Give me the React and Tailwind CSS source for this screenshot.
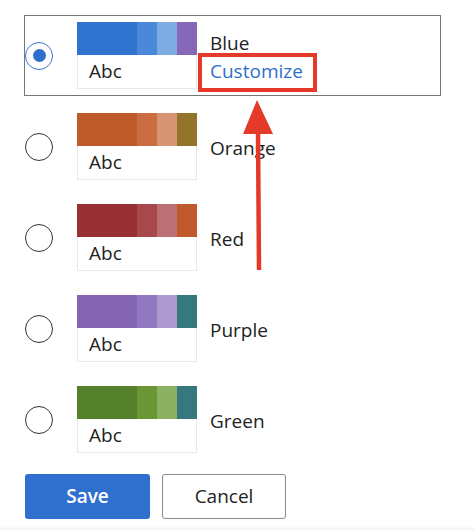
import React from "react";

const THEMES = [
  { name: "Blue", colors: ["#3174d0", "#4a88d8", "#7eabe2", "#8767b7"], selected: true },
  { name: "Orange", colors: ["#bf5a2b", "#cb6d41", "#d69472", "#94732a"] },
  { name: "Red", colors: ["#973134", "#a7494c", "#ba7074", "#c0592b"] },
  { name: "Purple", colors: ["#8465b4", "#9178c0", "#ae99d1", "#35797e"] },
  { name: "Green", colors: ["#54802b", "#6a9634", "#8db163", "#35797e"] },
];

const Radio = ({ checked }) =>
  checked ? (
    <div className="w-[28px] h-[28px] rounded-full border border-[#3b78cf] flex items-center justify-center shrink-0">
      <div className="w-[13px] h-[13px] rounded-full bg-[#2f6fcd]" />
    </div>
  ) : (
    <div className="w-[28px] h-[28px] rounded-full border-[1.5px] border-[#333333] shrink-0" />
  );

const Swatch = ({ colors }) => (
  <div className="w-[120px] shrink-0">
    <div className="flex h-[33px]">
      <div className="w-[60px]" style={{ background: colors[0] }} />
      <div className="w-[20px]" style={{ background: colors[1] }} />
      <div className="w-[20px]" style={{ background: colors[2] }} />
      <div className="w-[20px]" style={{ background: colors[3] }} />
    </div>
    <div className="h-[34px] border-x border-b border-[#e8e8e8] bg-white pl-[11px] pt-[4px] text-[19px] leading-[24px] text-[#222]">
      Abc
    </div>
  </div>
);

export default function App() {
  return (
    <div
      className="relative w-[474px] h-[530px] bg-white overflow-hidden pt-[15px] pl-[24px]"
      style={{ fontFamily: '"Open Sans", "Noto Sans", sans-serif' }}
    >
      <div className="flex flex-col gap-[10px]">
        {THEMES.map((t) => (
          <div
            key={t.name}
            className={
              "flex items-center w-[417px] h-[81px] border " +
              (t.selected ? "border-[#777777]" : "border-transparent")
            }
          >
            <Radio checked={t.selected} />
            <div className="ml-[24px]">
              <Swatch colors={t.colors} />
            </div>
            <div className="ml-[13px] flex flex-col gap-[4px] mt-[3px] text-[19px] leading-[24px] text-[#222]">
              <span>{t.name}</span>
              {t.selected && (
                <span className="relative text-[#2f6fc9]">
                  Customize
                  <span className="absolute left-[-12px] top-[-6px] w-[119px] h-[39px] border-4 border-[#e5392a]" />
                </span>
              )}
            </div>
          </div>
        ))}
      </div>

      <div className="flex gap-[12px] mt-[14px] ml-[1px]">
        <button className="w-[125px] h-[45px] rounded-[3px] bg-[#2f70cf] text-white text-[19px] font-semibold">
          Save
        </button>
        <button className="w-[124px] h-[45px] rounded-[3px] bg-white border border-[#8a8a8a] text-[#222] text-[19px]">
          Cancel
        </button>
      </div>

      <svg className="absolute left-0 top-0 pointer-events-none" width="474" height="530">
        <line x1="259" y1="270" x2="258" y2="130" stroke="#e5392a" strokeWidth="4.5" />
        <polygon points="257,100 243,134 273,134" fill="#e5392a" />
      </svg>
      <div className="absolute left-0 bottom-0 w-full h-[5px] bg-gradient-to-b from-white to-[#f2f2f2]" />
    </div>
  );
}
